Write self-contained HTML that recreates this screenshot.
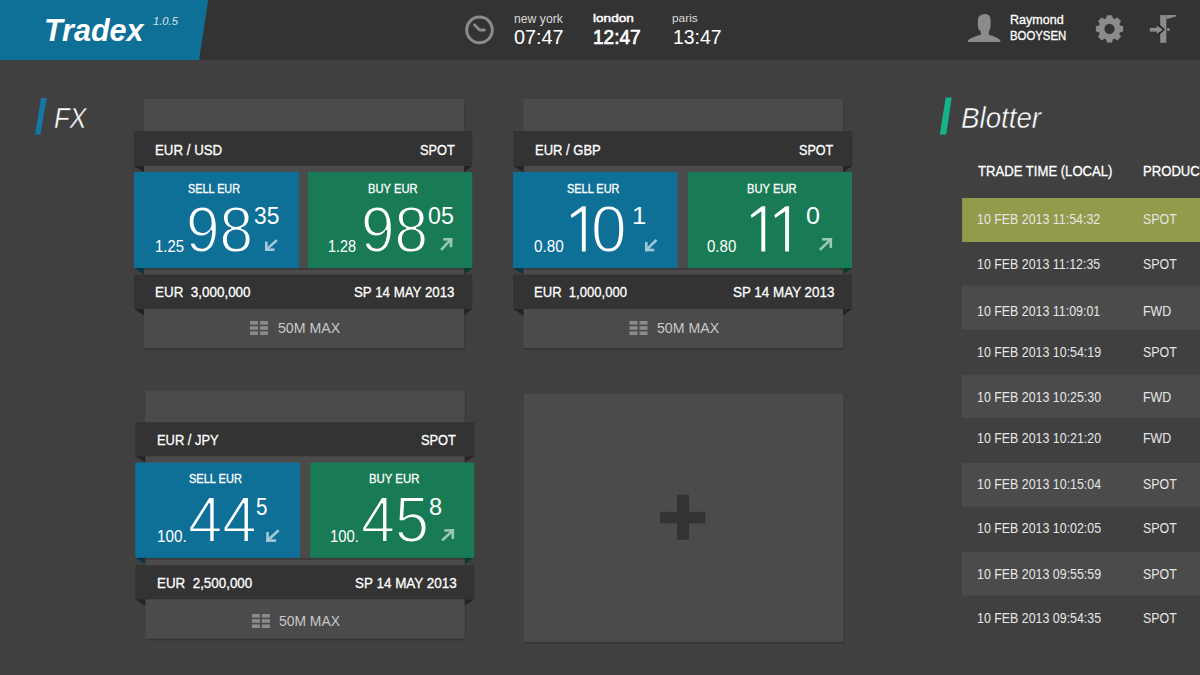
<!DOCTYPE html>
<html><head><meta charset="utf-8"><style>
html,body{margin:0;padding:0;}
body{width:1200px;height:675px;overflow:hidden;background:#404041;position:relative;font-family:"Liberation Sans",sans-serif;}
.t{position:absolute;white-space:pre;}
</style></head><body>
<div style='position:absolute;left:0px;top:0px;width:1200px;height:60px;background:#333333;'></div>
<svg width="1200" height="675" style="position:absolute;left:0;top:0">
<polygon points='0,0 208.2,0 199.1,60 0,60' fill='#0f7097'/>
<polygon points='41.1,98.1 46.7,98.1 40.4,134.4 35.2,134.4' fill='#1279a6'/>
<polygon points='945.7,97.6 951.7,97.6 946.25,134.4 939.75,134.4' fill='#17b388'/>
<rect x='144.5' y='100' width='320.50' height='249.60' fill='#353536' />
<rect x='144' y='99' width='320.20' height='249.00' fill='#4b4b4b' />
<polygon points='134,165.9 144,165.9 144,171.9' fill='#232323'/>
<polygon points='472.3,165.9 464.2,165.9 464.2,171.9' fill='#232323'/>
<rect x='134' y='131' width='338.30' height='34.90' fill='#333333' />
<polygon points='134,268 144,268 144,274.5' fill='#0b3444'/>
<polygon points='472.3,268 464.2,268 464.2,274.5' fill='#0e3b29'/>
<rect x='144' y='268' width='320.20' height='2.00' fill='#3c3c3d' />
<rect x='134' y='172' width='165.00' height='96.00' fill='#0f7097' />
<rect x='308' y='172' width='164.30' height='96.00' fill='#197b55' />
<polygon points='134,309 144,309 144,315.5' fill='#232323'/>
<polygon points='472.3,309 464.2,309 464.2,315.5' fill='#232323'/>
<rect x='134' y='274.5' width='338.30' height='34.50' fill='#333333' />
<rect x='524.0' y='100' width='320.00' height='249.60' fill='#353536' />
<rect x='523.5' y='99' width='319.70' height='249.00' fill='#4b4b4b' />
<polygon points='513.3,166 523.5,166 523.5,172' fill='#232323'/>
<polygon points='852.4,166 843.2,166 843.2,172' fill='#232323'/>
<rect x='513.3' y='131' width='339.10' height='35.00' fill='#333333' />
<polygon points='513,268 523.5,268 523.5,274.5' fill='#0b3444'/>
<polygon points='852,268 843.2,268 843.2,274.5' fill='#0e3b29'/>
<rect x='523.5' y='268' width='319.70' height='2.00' fill='#3c3c3d' />
<rect x='513' y='172' width='164.50' height='96.00' fill='#0f7097' />
<rect x='687.8' y='172' width='164.20' height='96.00' fill='#197b55' />
<polygon points='513,309 523.5,309 523.5,315.5' fill='#232323'/>
<polygon points='852,309 843.2,309 843.2,315.5' fill='#232323'/>
<rect x='513' y='274.5' width='339.00' height='34.50' fill='#333333' />
<rect x='145.8' y='391.7' width='319.80' height='248.70' fill='#353536' />
<rect x='145.3' y='390.7' width='319.50' height='248.10' fill='#4b4b4b' />
<polygon points='135.4,456.3 145.3,456.3 145.3,462.3' fill='#232323'/>
<polygon points='474.2,456.3 464.8,456.3 464.8,462.3' fill='#232323'/>
<rect x='135.4' y='422.2' width='338.80' height='34.10' fill='#333333' />
<polygon points='135.25,557.8 145.3,557.8 145.3,564.3' fill='#0b3444'/>
<polygon points='474.2,557.8 464.8,557.8 464.8,564.3' fill='#0e3b29'/>
<rect x='145.3' y='557.8' width='319.50' height='2.00' fill='#3c3c3d' />
<rect x='135.25' y='462.5' width='164.55' height='95.30' fill='#0f7097' />
<rect x='310.2' y='462.5' width='164.00' height='95.30' fill='#197b55' />
<polygon points='135.25,599.3 145.3,599.3 145.3,605.8' fill='#232323'/>
<polygon points='474.5,599.3 464.8,599.3 464.8,605.8' fill='#232323'/>
<rect x='135.25' y='565.2' width='339.25' height='34.10' fill='#333333' />
<rect x='524.1' y='394.6' width='320.30' height='248.90' fill='#353536' />
<rect x='523.6' y='393.6' width='320.00' height='248.30' fill='#4b4b4b' />
<rect x='660.2' y='511.8' width='45.10' height='11.60' fill='#333333' />
<rect x='677' y='494.6' width='12.00' height='45.10' fill='#333333' />
<g fill='#a3c8d9'><rect x='265' y='241.528' width='2.6' height='9.472000000000008'/><rect x='265' y='248.4' width='9.472000000000008' height='2.6'/></g><line x1='276.90000000000003' y1='240.1' x2='266.6' y2='249.4' stroke='#a3c8d9' stroke-width='2.6'/>
<g fill='#9bc8b3'><rect x='449.7' y='238' width='2.6' height='9.196000000000017'/><rect x='443.104' y='238' width='9.196000000000017' height='2.6'/></g><line x1='441.09999999999997' y1='249.9' x2='450.7' y2='239.6' stroke='#9bc8b3' stroke-width='2.6'/>
<rect x='250' y='321.0' width='8.00' height='3.60' fill='#8b8b8b' /><rect x='250' y='326.2' width='8.00' height='3.60' fill='#8b8b8b' /><rect x='250' y='331.4' width='8.00' height='3.60' fill='#8b8b8b' /><rect x='260' y='321.0' width='8.00' height='3.60' fill='#8b8b8b' /><rect x='260' y='326.2' width='8.00' height='3.60' fill='#8b8b8b' /><rect x='260' y='331.4' width='8.00' height='3.60' fill='#8b8b8b' />
<g fill='#a3c8d9'><rect x='645' y='242.12400000000002' width='2.6' height='9.175999999999982'/><rect x='645' y='248.70000000000002' width='9.175999999999982' height='2.6'/></g><line x1='656.5' y1='239.9' x2='646.6' y2='249.70000000000002' stroke='#a3c8d9' stroke-width='2.6'/>
<g fill='#9bc8b3'><rect x='829.5' y='238' width='2.6' height='9.956000000000017'/><rect x='822.144' y='238' width='9.956000000000017' height='2.6'/></g><line x1='819.9' y1='249.9' x2='830.5' y2='239.6' stroke='#9bc8b3' stroke-width='2.6'/>
<rect x='629.5' y='321.0' width='8.00' height='3.60' fill='#8b8b8b' /><rect x='629.5' y='326.2' width='8.00' height='3.60' fill='#8b8b8b' /><rect x='629.5' y='331.4' width='8.00' height='3.60' fill='#8b8b8b' /><rect x='639.5' y='321.0' width='8.00' height='3.60' fill='#8b8b8b' /><rect x='639.5' y='326.2' width='8.00' height='3.60' fill='#8b8b8b' /><rect x='639.5' y='331.4' width='8.00' height='3.60' fill='#8b8b8b' />
<g fill='#a3c8d9'><rect x='266.2' y='531.9839999999999' width='2.6' height='9.916000000000025'/><rect x='266.2' y='539.3' width='9.916000000000025' height='2.6'/></g><line x1='278.70000000000005' y1='530.3' x2='267.8' y2='540.3' stroke='#a3c8d9' stroke-width='2.6'/>
<g fill='#9bc8b3'><rect x='451.5' y='529.1' width='2.6' height='9.804000000000027'/><rect x='444.296' y='529.1' width='9.804000000000027' height='2.6'/></g><line x1='442.09999999999997' y1='540.4' x2='452.5' y2='530.7' stroke='#9bc8b3' stroke-width='2.6'/>
<rect x='251.9' y='614.0' width='8.00' height='3.60' fill='#8b8b8b' /><rect x='251.9' y='619.2' width='8.00' height='3.60' fill='#8b8b8b' /><rect x='251.9' y='624.4' width='8.00' height='3.60' fill='#8b8b8b' /><rect x='261.9' y='614.0' width='8.00' height='3.60' fill='#8b8b8b' /><rect x='261.9' y='619.2' width='8.00' height='3.60' fill='#8b8b8b' /><rect x='261.9' y='624.4' width='8.00' height='3.60' fill='#8b8b8b' />
<rect x='962.1' y='198' width='237.90' height='44.00' fill='#929a4c' />
<rect x='961.8' y='285.5' width='238.20' height='44.20' fill='#4b4b4b' />
<rect x='961.8' y='374.7' width='238.20' height='43.20' fill='#4b4b4b' />
<rect x='961.8' y='463' width='238.20' height='44.20' fill='#4b4b4b' />
<rect x='961.8' y='552.2' width='238.20' height='43.30' fill='#4b4b4b' />
<circle cx='479.5' cy='29.9' r='12.8' fill='none' stroke='#8b8b8b' stroke-width='3'/>
<polyline points='474.4,24.8 479.6,30 484.4,30' fill='none' stroke='#8b8b8b' stroke-width='2.9' stroke-linejoin='round' stroke-linecap='round'/>
<path d='M968,42 L968,40.2 C971,38.2 976,35.6 980.8,34.8 L980.8,31.6 C979,30.2 977.9,27.8 977.9,25.2 L977.9,20.2 C977.9,16.2 980.8,14 985.4,14 C989.2,14.2 990.6,16.8 990.6,20.2 L990.6,26 C990.4,28.4 989.9,30.3 988.8,31.4 L988.8,34.8 C993.6,35.6 998,38.2 1000.3,40.2 L1000.3,42 Z' fill='#8b8b8b'/>
<path d='M1105.29,18.74 L1106.06,18.45 L1106.92,15.24 L1112.08,15.24 L1112.94,18.45 L1113.71,18.74 L1114.45,19.08 L1117.33,17.41 L1120.99,21.07 L1119.32,23.95 L1119.66,24.69 L1119.95,25.46 L1123.16,26.32 L1123.16,31.48 L1119.95,32.34 L1119.66,33.11 L1119.32,33.85 L1120.99,36.73 L1117.33,40.39 L1114.45,38.72 L1113.71,39.06 L1112.94,39.35 L1112.08,42.56 L1106.92,42.56 L1106.06,39.35 L1105.29,39.06 L1104.55,38.72 L1101.67,40.39 L1098.01,36.73 L1099.68,33.85 L1099.34,33.11 L1099.05,32.34 L1095.84,31.48 L1095.84,26.32 L1099.05,25.46 L1099.34,24.69 L1099.68,23.95 L1098.01,21.07 L1101.67,17.41 L1104.55,19.08 Z M1114.6,28.9 A5.1,5.1 0 1,0 1104.4,28.9 A5.1,5.1 0 1,0 1114.6,28.9 Z' fill='#8b8b8b' fill-rule='evenodd'/>
<rect x='1160.2' y='15.1' width='6.1' height='27.7' fill='#8b8b8b'/>
<polygon points='1166.3,15.1 1175.9,15.1 1175.9,16.4 1166.3,19.3' fill='#8b8b8b'/>
<circle cx='1168.3' cy='29.5' r='1.5' fill='#8b8b8b'/>
<polyline points='1158.2,24.6 1163.9,29.6 1158.2,34.6' fill='none' stroke='#222222' stroke-width='1.5'/>
<rect x='1149.8' y='27.9' width='8' height='3.7' fill='#8b8b8b'/>
<polygon points='1156.8,25.3 1162.4,29.7 1156.8,34' fill='#8b8b8b'/>
</svg>
<div class='t' style='left:44.08px;top:15.30px;font-size:31.86px;line-height:31.86px;font-weight:bold;font-style:italic;color:#fff;transform:scaleX(0.9583);transform-origin:0 0;'>Tradex</div>
<div class='t' style='left:152.70px;top:15.70px;font-size:11.83px;line-height:11.83px;font-weight:normal;font-style:italic;color:#d6e4ea;transform:scaleX(0.9462);transform-origin:0 0;'>1.0.5</div>
<div class='t' style='left:513.78px;top:12.50px;font-size:11.99px;line-height:11.99px;font-weight:normal;font-style:normal;color:#dcdcdc;transform:scaleX(1.0191);transform-origin:0 0;'>new york</div>
<div class='t' style='left:513.86px;top:25.90px;font-size:21.13px;line-height:21.13px;font-weight:normal;font-style:normal;color:#fff;transform:scaleX(0.9392);transform-origin:0 0;'>07:47</div>
<div class='t' style='left:593.23px;top:12.25px;font-size:11.64px;line-height:11.64px;font-weight:normal;font-style:normal;color:#fff;transform:scaleX(1.1697);transform-origin:0 0;-webkit-text-stroke:0.45px currentColor;'>london</div>
<div class='t' style='left:593.46px;top:26.75px;font-size:20.21px;line-height:20.21px;font-weight:normal;font-style:normal;color:#fff;transform:scaleX(0.9429);transform-origin:0 0;-webkit-text-stroke:0.7px currentColor;'>12:47</div>
<div class='t' style='left:672.48px;top:12.25px;font-size:11.64px;line-height:11.64px;font-weight:normal;font-style:normal;color:#dcdcdc;transform:scaleX(1.0208);transform-origin:0 0;'>paris</div>
<div class='t' style='left:672.54px;top:26.75px;font-size:20.21px;line-height:20.21px;font-weight:normal;font-style:normal;color:#fff;transform:scaleX(0.9612);transform-origin:0 0;'>13:47</div>
<div class='t' style='left:1009.54px;top:13.00px;font-size:13.04px;line-height:13.04px;font-weight:normal;font-style:normal;color:#fff;transform:scaleX(0.9630);transform-origin:0 0;-webkit-text-stroke:0.3px currentColor;'>Raymond</div>
<div class='t' style='left:1009.58px;top:30.00px;font-size:12.32px;line-height:12.32px;font-weight:normal;font-style:normal;color:#fff;transform:scaleX(0.9237);transform-origin:0 0;-webkit-text-stroke:0.3px currentColor;'>BOOYSEN</div>
<div class='t' style='left:53.72px;top:103.03px;font-size:29.64px;line-height:29.64px;font-weight:normal;font-style:italic;color:#fff;transform:scaleX(0.8554);transform-origin:0 0;-webkit-text-stroke:0.45px #404041;'>FX</div>
<div class='t' style='left:960.84px;top:102.62px;font-size:29.78px;line-height:29.78px;font-weight:normal;font-style:italic;color:#fff;transform:scaleX(0.9308);transform-origin:0 0;-webkit-text-stroke:0.45px #404041;'>Blotter</div>
<div class='t' style='left:155.07px;top:142.60px;font-size:14.35px;line-height:14.35px;font-weight:normal;font-style:normal;color:#fff;transform:scaleX(0.9268);transform-origin:0 0;-webkit-text-stroke:0.3px currentColor;'>EUR / USD</div>
<div class='t' style='left:419.88px;top:142.70px;font-size:14.78px;line-height:14.78px;font-weight:normal;font-style:normal;color:#fff;transform:scaleX(0.8679);transform-origin:0 0;-webkit-text-stroke:0.3px currentColor;'>SPOT</div>
<div class='t' style='left:187.92px;top:182.60px;font-size:12.32px;line-height:12.32px;font-weight:normal;font-style:normal;color:#fff;transform:scaleX(0.8807);transform-origin:0 0;-webkit-text-stroke:0.3px currentColor;'>SELL EUR</div>
<div class='t' style='left:367.99px;top:182.60px;font-size:12.32px;line-height:12.32px;font-weight:normal;font-style:normal;color:#fff;transform:scaleX(0.9113);transform-origin:0 0;-webkit-text-stroke:0.3px currentColor;'>BUY EUR</div>
<div class='t' style='left:185.85px;top:196.60px;font-size:65.63px;line-height:65.63px;font-weight:normal;font-style:normal;color:#fff;transform:scaleX(0.9179);transform-origin:0 0;-webkit-text-stroke:1.8px #0f7097;'>98</div>
<div class='t' style='left:253.65px;top:203.90px;font-size:23.94px;line-height:23.94px;font-weight:normal;font-style:normal;color:#fff;transform:scaleX(0.9520);transform-origin:0 0;'>35</div>
<div class='t' style='left:155.07px;top:237.70px;font-size:16.06px;line-height:16.06px;font-weight:normal;font-style:normal;color:#fff;transform:scaleX(0.9267);transform-origin:0 0;'>1.25</div>
<div class='t' style='left:360.55px;top:196.60px;font-size:65.63px;line-height:65.63px;font-weight:normal;font-style:normal;color:#fff;transform:scaleX(0.9179);transform-origin:0 0;-webkit-text-stroke:1.8px #197b55;'>98</div>
<div class='t' style='left:427.93px;top:203.90px;font-size:23.94px;line-height:23.94px;font-weight:normal;font-style:normal;color:#fff;transform:scaleX(0.9680);transform-origin:0 0;'>05</div>
<div class='t' style='left:328.10px;top:237.70px;font-size:16.06px;line-height:16.06px;font-weight:normal;font-style:normal;color:#fff;transform:scaleX(0.9000);transform-origin:0 0;'>1.28</div>
<div class='t' style='left:154.61px;top:284.20px;font-size:15.07px;line-height:15.07px;font-weight:normal;font-style:normal;color:#fff;transform:scaleX(0.8915);transform-origin:0 0;-webkit-text-stroke:0.3px currentColor;'>EUR  3,000,000</div>
<div class='t' style='left:354.32px;top:284.20px;font-size:15.07px;line-height:15.07px;font-weight:normal;font-style:normal;color:#fff;transform:scaleX(0.8821);transform-origin:0 0;-webkit-text-stroke:0.3px currentColor;'>SP 14 MAY 2013</div>
<div class='t' style='left:277.53px;top:321.00px;font-size:14.64px;line-height:14.64px;font-weight:normal;font-style:normal;color:#c9c9c9;transform:scaleX(0.9667);transform-origin:0 0;'>50M MAX</div>
<div class='t' style='left:534.99px;top:142.60px;font-size:14.35px;line-height:14.35px;font-weight:normal;font-style:normal;color:#fff;transform:scaleX(0.9070);transform-origin:0 0;-webkit-text-stroke:0.3px currentColor;'>EUR / GBP</div>
<div class='t' style='left:799.12px;top:142.60px;font-size:14.35px;line-height:14.35px;font-weight:normal;font-style:normal;color:#fff;transform:scaleX(0.8789);transform-origin:0 0;-webkit-text-stroke:0.3px currentColor;'>SPOT</div>
<div class='t' style='left:566.81px;top:182.60px;font-size:12.32px;line-height:12.32px;font-weight:normal;font-style:normal;color:#fff;transform:scaleX(0.8877);transform-origin:0 0;-webkit-text-stroke:0.3px currentColor;'>SELL EUR</div>
<div class='t' style='left:747.29px;top:182.60px;font-size:12.32px;line-height:12.32px;font-weight:normal;font-style:normal;color:#fff;transform:scaleX(0.9094);transform-origin:0 0;-webkit-text-stroke:0.3px currentColor;'>BUY EUR</div>
<div class='t' style='left:590.92px;top:196.20px;font-size:66.76px;line-height:66.76px;font-weight:normal;font-style:normal;color:#fff;transform:scaleX(0.9594);transform-origin:0 0;-webkit-text-stroke:1.8px #0f7097;'>0</div>
<div class='t' style='left:631.76px;top:203.90px;font-size:23.94px;line-height:23.94px;font-weight:normal;font-style:normal;color:#fff;transform:scaleX(1.0700);transform-origin:0 0;'>1</div>
<div class='t' style='left:534.05px;top:237.70px;font-size:16.06px;line-height:16.06px;font-weight:normal;font-style:normal;color:#fff;transform:scaleX(0.9500);transform-origin:0 0;'>0.80</div>
<div class='t' style='left:806.35px;top:203.90px;font-size:23.94px;line-height:23.94px;font-weight:normal;font-style:normal;color:#fff;transform:scaleX(1.0500);transform-origin:0 0;'>0</div>
<div class='t' style='left:706.76px;top:237.70px;font-size:16.06px;line-height:16.06px;font-weight:normal;font-style:normal;color:#fff;transform:scaleX(0.9367);transform-origin:0 0;'>0.80</div>
<div class='t' style='left:534.13px;top:284.20px;font-size:15.07px;line-height:15.07px;font-weight:normal;font-style:normal;color:#fff;transform:scaleX(0.8670);transform-origin:0 0;-webkit-text-stroke:0.3px currentColor;'>EUR  1,000,000</div>
<div class='t' style='left:733.41px;top:284.20px;font-size:15.07px;line-height:15.07px;font-weight:normal;font-style:normal;color:#fff;transform:scaleX(0.8902);transform-origin:0 0;-webkit-text-stroke:0.3px currentColor;'>SP 14 MAY 2013</div>
<div class='t' style='left:656.93px;top:321.00px;font-size:14.64px;line-height:14.64px;font-weight:normal;font-style:normal;color:#c9c9c9;transform:scaleX(0.9667);transform-origin:0 0;'>50M MAX</div>
<div class='t' style='left:156.72px;top:432.90px;font-size:14.64px;line-height:14.64px;font-weight:normal;font-style:normal;color:#fff;transform:scaleX(0.8826);transform-origin:0 0;-webkit-text-stroke:0.3px currentColor;'>EUR / JPY</div>
<div class='t' style='left:421.39px;top:432.90px;font-size:14.93px;line-height:14.93px;font-weight:normal;font-style:normal;color:#fff;transform:scaleX(0.8590);transform-origin:0 0;-webkit-text-stroke:0.3px currentColor;'>SPOT</div>
<div class='t' style='left:188.91px;top:472.70px;font-size:12.32px;line-height:12.32px;font-weight:normal;font-style:normal;color:#fff;transform:scaleX(0.8947);transform-origin:0 0;-webkit-text-stroke:0.3px currentColor;'>SELL EUR</div>
<div class='t' style='left:368.78px;top:472.70px;font-size:12.32px;line-height:12.32px;font-weight:normal;font-style:normal;color:#fff;transform:scaleX(0.9245);transform-origin:0 0;-webkit-text-stroke:0.3px currentColor;'>BUY EUR</div>
<div class='t' style='left:187.96px;top:486.80px;font-size:65.35px;line-height:65.35px;font-weight:normal;font-style:normal;color:#fff;transform:scaleX(0.9429);transform-origin:0 0;-webkit-text-stroke:1.8px #0f7097;'>44</div>
<div class='t' style='left:255.92px;top:495.80px;font-size:23.38px;line-height:23.38px;font-weight:normal;font-style:normal;color:#fff;transform:scaleX(0.8818);transform-origin:0 0;'>5</div>
<div class='t' style='left:156.74px;top:527.90px;font-size:16.06px;line-height:16.06px;font-weight:normal;font-style:normal;color:#fff;transform:scaleX(0.9552);transform-origin:0 0;'>100.</div>
<div class='t' style='left:361.47px;top:486.80px;font-size:65.35px;line-height:65.35px;font-weight:normal;font-style:normal;color:#fff;transform:scaleX(0.9348);transform-origin:0 0;-webkit-text-stroke:1.8px #197b55;'>45</div>
<div class='t' style='left:429.29px;top:495.80px;font-size:23.38px;line-height:23.38px;font-weight:normal;font-style:normal;color:#fff;transform:scaleX(1.0091);transform-origin:0 0;'>8</div>
<div class='t' style='left:329.67px;top:527.90px;font-size:16.06px;line-height:16.06px;font-weight:normal;font-style:normal;color:#fff;transform:scaleX(0.9276);transform-origin:0 0;'>100.</div>
<div class='t' style='left:156.81px;top:574.70px;font-size:15.07px;line-height:15.07px;font-weight:normal;font-style:normal;color:#fff;transform:scaleX(0.8887);transform-origin:0 0;-webkit-text-stroke:0.3px currentColor;'>EUR  2,500,000</div>
<div class='t' style='left:355.11px;top:574.70px;font-size:15.07px;line-height:15.07px;font-weight:normal;font-style:normal;color:#fff;transform:scaleX(0.8929);transform-origin:0 0;-webkit-text-stroke:0.3px currentColor;'>SP 14 MAY 2013</div>
<div class='t' style='left:279.25px;top:613.60px;font-size:14.64px;line-height:14.64px;font-weight:normal;font-style:normal;color:#c9c9c9;transform:scaleX(0.9492);transform-origin:0 0;'>50M MAX</div>
<div class='t' style='left:977.90px;top:164.80px;font-size:13.91px;line-height:13.91px;font-weight:normal;font-style:normal;color:#fff;transform:scaleX(0.9423);transform-origin:0 0;-webkit-text-stroke:0.3px currentColor;'>TRADE TIME (LOCAL)</div>
<div class='t' style='left:1142.86px;top:164.80px;font-size:13.91px;line-height:13.91px;font-weight:normal;font-style:normal;color:#fff;transform:scaleX(0.9423);transform-origin:0 0;-webkit-text-stroke:0.3px currentColor;'>PRODUCT</div>
<div class='t' style='left:976.53px;top:212.00px;font-size:14.2px;line-height:14.2px;font-weight:normal;font-style:normal;color:#e6e6e6;transform:scaleX(0.8741);transform-origin:0 0;'>10 FEB 2013 11:54:32</div>
<div class='t' style='left:1142.93px;top:212.00px;font-size:14.2px;line-height:14.2px;font-weight:normal;font-style:normal;color:#e6e6e6;transform:scaleX(0.8741);transform-origin:0 0;'>SPOT</div>
<div class='t' style='left:976.53px;top:257.00px;font-size:14.2px;line-height:14.2px;font-weight:normal;font-style:normal;color:#e6e6e6;transform:scaleX(0.8741);transform-origin:0 0;'>10 FEB 2013 11:12:35</div>
<div class='t' style='left:1142.93px;top:257.00px;font-size:14.2px;line-height:14.2px;font-weight:normal;font-style:normal;color:#e6e6e6;transform:scaleX(0.8741);transform-origin:0 0;'>SPOT</div>
<div class='t' style='left:976.53px;top:303.70px;font-size:14.2px;line-height:14.2px;font-weight:normal;font-style:normal;color:#e6e6e6;transform:scaleX(0.8741);transform-origin:0 0;'>10 FEB 2013 11:09:01</div>
<div class='t' style='left:1142.93px;top:303.70px;font-size:14.2px;line-height:14.2px;font-weight:normal;font-style:normal;color:#e6e6e6;transform:scaleX(0.8741);transform-origin:0 0;'>FWD</div>
<div class='t' style='left:976.53px;top:344.80px;font-size:14.2px;line-height:14.2px;font-weight:normal;font-style:normal;color:#e6e6e6;transform:scaleX(0.8741);transform-origin:0 0;'>10 FEB 2013 10:54:19</div>
<div class='t' style='left:1142.93px;top:344.80px;font-size:14.2px;line-height:14.2px;font-weight:normal;font-style:normal;color:#e6e6e6;transform:scaleX(0.8741);transform-origin:0 0;'>SPOT</div>
<div class='t' style='left:976.53px;top:389.60px;font-size:14.2px;line-height:14.2px;font-weight:normal;font-style:normal;color:#e6e6e6;transform:scaleX(0.8741);transform-origin:0 0;'>10 FEB 2013 10:25:30</div>
<div class='t' style='left:1142.93px;top:389.60px;font-size:14.2px;line-height:14.2px;font-weight:normal;font-style:normal;color:#e6e6e6;transform:scaleX(0.8741);transform-origin:0 0;'>FWD</div>
<div class='t' style='left:976.53px;top:431.40px;font-size:14.2px;line-height:14.2px;font-weight:normal;font-style:normal;color:#e6e6e6;transform:scaleX(0.8741);transform-origin:0 0;'>10 FEB 2013 10:21:20</div>
<div class='t' style='left:1142.93px;top:431.40px;font-size:14.2px;line-height:14.2px;font-weight:normal;font-style:normal;color:#e6e6e6;transform:scaleX(0.8741);transform-origin:0 0;'>FWD</div>
<div class='t' style='left:976.53px;top:476.70px;font-size:14.2px;line-height:14.2px;font-weight:normal;font-style:normal;color:#e6e6e6;transform:scaleX(0.8741);transform-origin:0 0;'>10 FEB 2013 10:15:04</div>
<div class='t' style='left:1142.93px;top:476.70px;font-size:14.2px;line-height:14.2px;font-weight:normal;font-style:normal;color:#e6e6e6;transform:scaleX(0.8741);transform-origin:0 0;'>SPOT</div>
<div class='t' style='left:976.53px;top:520.60px;font-size:14.2px;line-height:14.2px;font-weight:normal;font-style:normal;color:#e6e6e6;transform:scaleX(0.8741);transform-origin:0 0;'>10 FEB 2013 10:02:05</div>
<div class='t' style='left:1142.93px;top:520.60px;font-size:14.2px;line-height:14.2px;font-weight:normal;font-style:normal;color:#e6e6e6;transform:scaleX(0.8741);transform-origin:0 0;'>SPOT</div>
<div class='t' style='left:976.53px;top:566.70px;font-size:14.2px;line-height:14.2px;font-weight:normal;font-style:normal;color:#e6e6e6;transform:scaleX(0.8741);transform-origin:0 0;'>10 FEB 2013 09:55:59</div>
<div class='t' style='left:1142.93px;top:566.70px;font-size:14.2px;line-height:14.2px;font-weight:normal;font-style:normal;color:#e6e6e6;transform:scaleX(0.8741);transform-origin:0 0;'>SPOT</div>
<div class='t' style='left:976.53px;top:610.90px;font-size:14.2px;line-height:14.2px;font-weight:normal;font-style:normal;color:#e6e6e6;transform:scaleX(0.8741);transform-origin:0 0;'>10 FEB 2013 09:54:35</div>
<div class='t' style='left:1142.93px;top:610.90px;font-size:14.2px;line-height:14.2px;font-weight:normal;font-style:normal;color:#e6e6e6;transform:scaleX(0.8741);transform-origin:0 0;'>SPOT</div>
<svg width="1200" height="675" style="position:absolute;left:0;top:0">
<polygon points='582.4499999999999,206.3 585.75,206.3 585.75,251.6 581.8499999999999,251.6 581.8499999999999,211.3 571.6,217.89999999999998 570.7,214.7' fill='#ffffff'/>
<polygon points='761.9499999999999,206.3 765.25,206.3 765.25,251.6 761.3499999999999,251.6 761.3499999999999,211.3 751.6,218.1 750.7,214.9' fill='#ffffff'/>
<polygon points='785.75,206.3 789.0500000000001,206.3 789.0500000000001,251.6 785.15,251.6 785.15,211.3 775.1999999999999,218.1 774.3,214.9' fill='#ffffff'/>
</svg>
</body></html>
